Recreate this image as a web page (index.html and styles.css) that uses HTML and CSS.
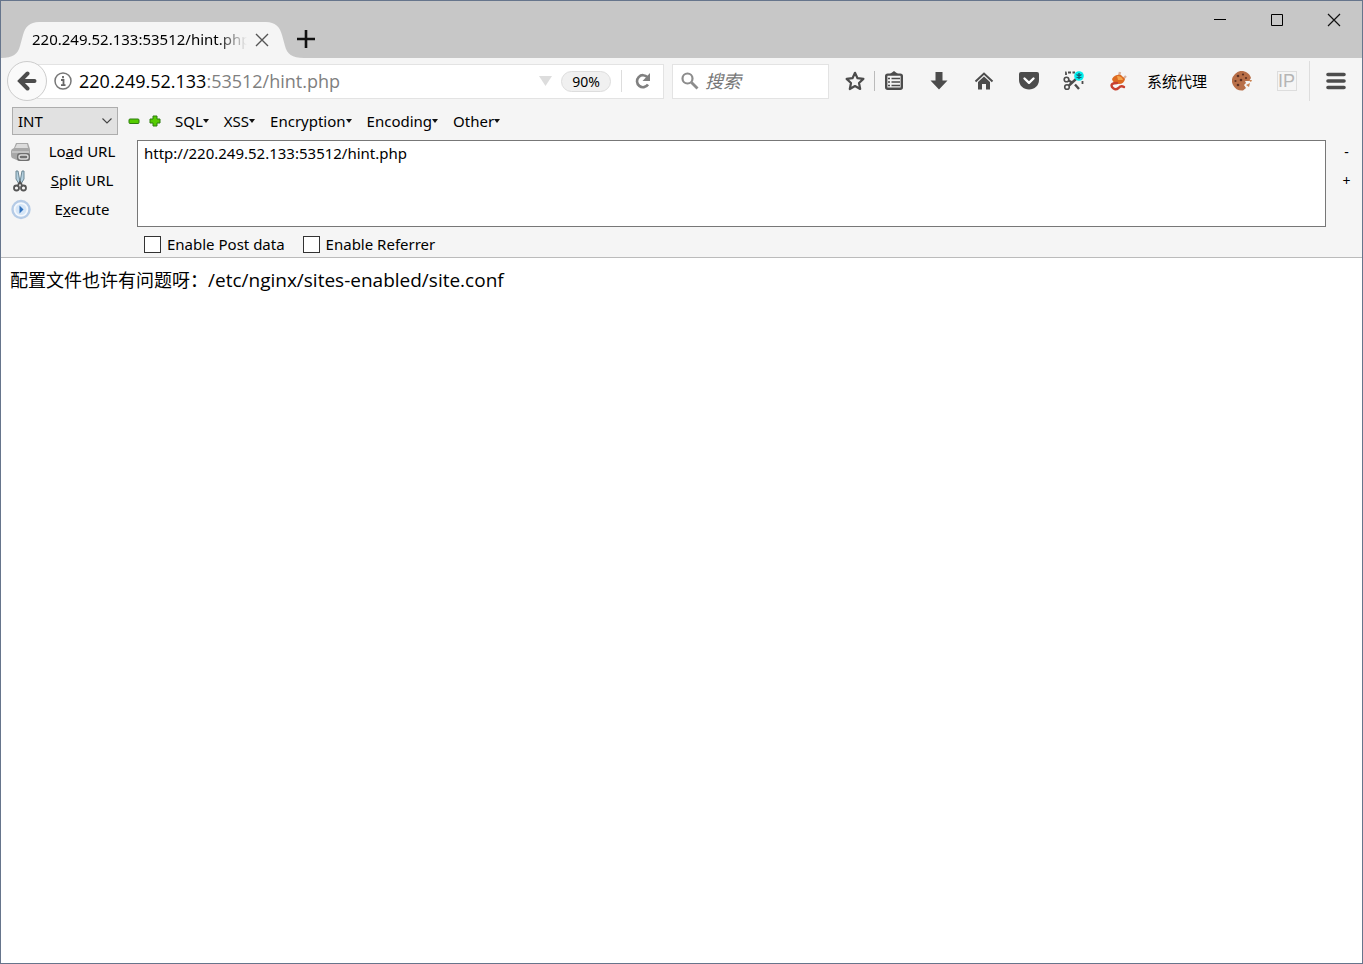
FILE: index.html
```
<!DOCTYPE html>
<html lang="zh-CN">
<head>
    <meta charset="UTF-8">
    <meta name="viewport" content="width=device-width, initial-scale=1.0">
    <title>220.249.52.133:53512/hint.php</title>
    <link rel="stylesheet" href="styles.css">
</head>
<body>
<div class="window">
    <header class="titlebar">
        <div class="tab">
            <svg class="tab-shape" width="303" height="36" viewBox="0 0 303 36"><path d="M0 36C12 36 17 32 19 24L22 13C24 5 29 0 38 0H265C274 0 279 5 281 13L284 24C286 32 291 36 303 36Z" fill="#f5f5f5"/></svg>
            <span class="tab-title">220.249.52.133:53512/hint.php</span>
            <button class="tab-close" aria-label="关闭标签页">
                <svg width="14" height="14" viewBox="0 0 14 14"><path d="M1 1L13 13M13 1L1 13" stroke="#555" stroke-width="1.4"/></svg>
            </button>
        </div>
        <button class="new-tab" aria-label="新标签页">
            <svg width="18" height="18" viewBox="0 0 18 18"><path d="M9 0V18M0 9H18" stroke="#111" stroke-width="2.6"/></svg>
        </button>
        <div class="window-buttons">
            <button aria-label="最小化"><svg width="14" height="14" viewBox="0 0 14 14"><path d="M1 6.500H13" stroke="#000"/></svg></button>
            <button aria-label="最大化"><svg width="14" height="14" viewBox="0 0 14 14"><path d="M1.500 1.500H12.500V12.500H1.500Z" fill="none" stroke="#000"/></svg></button>
            <button aria-label="关闭"><svg width="14" height="14" viewBox="0 0 14 14"><path d="M1 1L13 13M13 1L1 13" stroke="#111" stroke-width="1.2"/></svg></button>
        </div>
    </header>

    <!-- 导航栏 -->
    <nav class="navbar">
        <button class="back" aria-label="后退">
            <svg width="20" height="20" viewBox="0 0 20 20"><path d="M10.500 2.500L3 10L10.500 17.500M3.500 10H17.500" fill="none" stroke="#4c4c4c" stroke-width="4" stroke-linecap="round" stroke-linejoin="miter"/></svg>
        </button>
        <div class="urlbar">
            <svg width="18" height="18" viewBox="0 0 18 18"><circle cx="9" cy="9" r="8" fill="none" stroke="#777" stroke-width="1.500"/><path d="M9 4V6.200M7 8H9.500V13M7 13.200H11.500" fill="none" stroke="#666" stroke-width="1.800"/></svg>
            <span class="url"><b>220.249.52.133</b>:53512/hint.php</span>
            <svg class="dropmarker" width="13" height="10" viewBox="0 0 13 10"><path d="M0 0H13L6.500 10Z" fill="#ddd"/></svg>
            <button class="zoom">90%</button>
            <button class="reload" aria-label="刷新">
                <svg width="16" height="16" viewBox="0 0 16 16"><path d="M12.500 4.200A6 6 0 1 0 13 11.500" fill="none" stroke="#808080" stroke-width="2.600"/><path d="M15 0V8H7.500Z" fill="#808080"/></svg>
            </button>
        </div>
        <label class="searchbar">
            <svg width="18" height="18" viewBox="0 0 18 18"><circle cx="6.500" cy="6.500" r="5" fill="none" stroke="#8c8c8c" stroke-width="2.200"/><path d="M10.500 10.500L16.500 16.500" stroke="#8c8c8c" stroke-width="2.800"/></svg>
            <input type="text" placeholder="搜索" aria-label="搜索">
        </label>
        <button class="star" aria-label="收藏">
            <svg width="20" height="20" viewBox="0 0 20 20"><path d="M10 1.800L12.500 7.200L18.400 7.900L14 12L15.200 18L10 15L4.800 18L6 12L1.600 7.900L7.500 7.200Z" fill="none" stroke="#4c4c4c" stroke-width="2.200" stroke-linejoin="round"/></svg>
        </button>
        <div class="tools">
            <button aria-label="书签">
                <svg width="20" height="20" viewBox="0 0 20 20"><path d="M6 3L10 0L14 3Z" fill="#4c4c4c"/><rect x="2.200" y="3.600" width="15.600" height="14.200" rx="1.500" fill="none" stroke="#4c4c4c" stroke-width="2.400"/><path d="M4 7.500H6M7.500 7.500H16M4 11H6M7.500 11H16M4 14.500H6M7.500 14.500H16" stroke="#4c4c4c" stroke-width="1.600"/></svg>
            </button>
            <button aria-label="下载">
                <svg width="20" height="20" viewBox="0 0 20 20"><path d="M6.500 1H13.500V9.500H18.500L10 18.500L1.500 9.500H6.500Z" fill="#4c4c4c"/></svg>
            </button>
            <button aria-label="主页">
                <svg width="20" height="20" viewBox="0 0 20 20"><path d="M1.500 10.500L10 2.500L18.500 10.500" fill="none" stroke="#4c4c4c" stroke-width="2"/><path d="M4 11L10 5.500L16 11V18.500H12V13H8V18.500H4Z" fill="#4c4c4c"/></svg>
            </button>
            <button aria-label="Pocket">
                <svg width="20" height="20" viewBox="0 0 20 20"><path d="M2 1H18Q20 1 20 3V9C20 14.500 15.500 18.500 10 18.500S0 14.500 0 9V3Q0 1 2 1Z" fill="#4c4c4c"/><path d="M5.500 7.500L10 11.800L14.500 7.500" fill="none" stroke="#fff" stroke-width="2.400" stroke-linecap="round" stroke-linejoin="round"/></svg>
            </button>
            <button aria-label="截图">
                <svg width="22" height="20" viewBox="0 0 22 20"><path d="M3 4V1.500H12M19.500 10V13" fill="none" stroke="#4c4c4c" stroke-width="1.800" stroke-dasharray="3 1.500"/><circle cx="3.500" cy="8.500" r="2.300" fill="none" stroke="#4c4c4c" stroke-width="1.600"/><circle cx="4" cy="16" r="2.300" fill="none" stroke="#4c4c4c" stroke-width="1.600"/><path d="M5.500 9.500L10 12M12 13.500L16 18M6 14.500L13 8" stroke="#4c4c4c" stroke-width="2.400"/><circle cx="16" cy="5" r="4.800" fill="#0ee"/><path d="M16 2V8M13.500 3.500L18.500 6.500M18.500 3.500L13.500 6.500" stroke="#155c70" stroke-width="1.400"/></svg>
            </button>
            <button aria-label="FoxyProxy">
                <svg width="20" height="20" viewBox="0 0 20 20"><path d="M10 5L11 1M14 8L17 5" stroke="#d9b09c" stroke-width="2.400"/><path d="M3 8Q6 3 12 4L16 8Q15 13 10 13Q4 13 3 8Z" fill="#dd6a20"/><path d="M8 5Q13 5 14 9L9 9Z" fill="#f5a44c"/><path d="M8 12Q1 12 3 16Q6 20 9.500 17Q12 14 15 16" fill="none" stroke="#c8402f" stroke-width="2.400" stroke-linecap="round"/></svg>
            </button>
            <button class="proxy">系统代理</button>
            <button aria-label="Cookie">
                <svg width="20" height="20" viewBox="0 0 20 20"><path d="M14 1Q8-2 3 3T1 14Q4 20 11 19.500L14 17L12 14L14 12L13 10L17 10L19 7Q18 3 14 1Z" fill="#b86f48"/><path d="M14 14L18 12L17 16ZM16 9L20 9L19 11Z" fill="#c9814f"/><g fill="#5c3022"><circle cx="6" cy="5" r="1.300"/><circle cx="11" cy="3.500" r="1.100"/><circle cx="3.500" cy="10" r="1.100"/><circle cx="9" cy="9" r="1.300"/><circle cx="6" cy="14" r="1.300"/><circle cx="14" cy="7" r="1.100"/></g></svg>
            </button>
            <button class="ip"><span>IP</span></button>
        </div>
        <button class="menu" aria-label="菜单">
            <svg width="20" height="18" viewBox="0 0 20 18"><path d="M2 2.500H18M2 9H18M2 15.500H18" stroke="#4c4c4c" stroke-width="3.600" stroke-linecap="round"/></svg>
        </button>
    </nav>

    <!-- HackBar -->
    <section class="hackbar">
        <div class="hackbar-menu">
            <div class="select">
                <select aria-label="类型">
                    <option>INT</option>
                </select>
                <svg width="10" height="6" viewBox="0 0 10 6"><path d="M0.500 0.500L5 5L9.500 0.500" fill="none" stroke="#444" stroke-width="1.100"/></svg>
            </div>
            <button class="minus" aria-label="减"><svg width="12" height="12" viewBox="0 0 12 12"><rect x="1" y="4" width="10" height="4.500" rx="1" fill="#5c0" stroke="#2f7d10"/></svg></button>
            <button class="plus" aria-label="加"><svg width="12" height="12" viewBox="0 0 12 12"><path d="M4 1H8V4H11V8H8V11H4V8H1V4H4Z" fill="#5c0" stroke="#2f7d10" stroke-linejoin="round"/></svg></button>
            <div class="menus">
                <button>SQL</button>
                <button>XSS</button>
                <button>Encryption</button>
                <button>Encoding</button>
                <button>Other</button>
            </div>
        </div>
        <div class="hackbar-main">
            <div class="actions">
                <button>
                    <svg width="22" height="22" viewBox="0 0 22 22"><path d="M6 2H18L20 8V18Q20 20 18 20H9L2 17Q1 16 1 14V10Q1 8 4 7Z" fill="#a8a8a8"/><path d="M7 3H17L18 7H5Z" fill="#dcdcdc"/><path d="M2 10H19V12H2Z" fill="#c4c4c4"/><rect x="7" y="12" width="13" height="8" rx="3" fill="#707070"/><rect x="9" y="14" width="9" height="4" rx="2" fill="none" stroke="#ddd" stroke-width="1.400"/></svg>
                    <span>Lo<u>a</u>d URL</span>
                </button>
                <button>
                    <svg width="22" height="24" viewBox="0 0 22 24"><path d="M6 2V10L9 15L10 13L8 2ZM14 2V10L11 15L10 13L12 2Z" fill="#b4d0df" stroke="#6c8794"/><circle cx="6.500" cy="19" r="2.500" fill="none" stroke="#555" stroke-width="1.800"/><circle cx="13.500" cy="19" r="2.500" fill="none" stroke="#555" stroke-width="1.800"/><path d="M8 16L10 13L12 16" fill="none" stroke="#555" stroke-width="2"/></svg>
                    <span><u>S</u>plit URL</span>
                </button>
                <button>
                    <svg width="22" height="22" viewBox="0 0 22 22"><circle cx="11" cy="10.500" r="8.500" fill="#f4f8fd" stroke="#b5cbe6" stroke-width="2.400"/><circle cx="11" cy="10.500" r="5.500" fill="#d6e6f7"/><path d="M9.500 6.500L13.500 10.500L9.500 14.500Z" fill="#3474c0"/></svg>
                    <span>E<u>x</u>ecute</span>
                </button>
            </div>
            <div class="fields">
                <textarea aria-label="URL" spellcheck="false">http://220.249.52.133:53512/hint.php</textarea>
                <div class="checks">
                    <label><input type="checkbox"> Enable Post data</label>
                    <label><input type="checkbox"> Enable Referrer</label>
                </div>
            </div>
            <div class="resize">
                <button>-</button>
                <button>+</button>
            </div>
        </div>
    </section>

    <main>配置文件也许有问题呀：<span class="path">/etc/nginx/sites-enabled/site.conf</span></main>
</div>
</body>
</html>
```

FILE: styles.css
```
* {
    box-sizing: border-box;
}
body {
    margin: 0;
    font-family: "Noto Sans", "Noto Sans CJK SC", sans-serif;
    font-size: 15px;
    color: #000;
}
button, input, select, textarea {
    font: inherit;
    color: inherit;
}
button {
    display: flex;
    align-items: center;
    justify-content: center;
    padding: 0;
    border: none;
    background: none;
}
svg {
    flex-shrink: 0;
}
.window {
    display: flex;
    flex-direction: column;
    min-height: 100vh;
    border: 1px solid #66758c;
    background: #fff;
}

/* 标题栏 */
.titlebar {
    display: flex;
    align-items: flex-end;
    height: 57px;
    background: #c7c7c7;
}
.tab {
    position: relative;
    display: flex;
    align-items: center;
    width: 290px;
    height: 36px;
    padding-left: 31px;
}
.tab-shape {
    position: absolute;
    left: 0;
    top: 0;
}
.tab-title {
    position: relative;
    width: 215px;
    padding-bottom: 2px;
    white-space: nowrap;
    mask-image: linear-gradient(to right, #000 185px, transparent 215px);
}
.tab-close {
    position: relative;
    width: 30px;
    height: 30px;
}
.new-tab {
    width: 30px;
    height: 38px;
}
.window-buttons {
    display: flex;
    align-self: flex-start;
    margin-left: auto;
}
.window-buttons button {
    width: 57px;
    height: 38px;
}

/* 导航栏 */
.navbar {
    display: flex;
    align-items: center;
    height: 46px;
    padding-left: 6px;
    background: #f5f5f5;
}
.back {
    z-index: 1;
    width: 40px;
    height: 40px;
    border: 1px solid #ccc;
    border-radius: 50%;
    background: #fafafa;
}
.urlbar {
    display: flex;
    flex: 1;
    align-items: center;
    height: 35px;
    margin-left: -10px;
    padding-left: 16px;
    border: 1px solid #e3e3e3;
    background: #fff;
}
.url {
    flex: 1;
    margin-left: 7px;
    font-family: "Open Sans", sans-serif;
    font-size: 18px;
    color: #808080;
}
.url b {
    font-weight: normal;
    color: #000;
}
.zoom {
    width: 50px;
    height: 21px;
    margin: 0 10px 0 9px;
    border: 1px solid #ddd;
    border-radius: 11px;
    background: #f0f0f0;
    font-size: 14px;
}
.reload {
    width: 42px;
    height: 22px;
    border-left: 1px solid #ddd;
}
.searchbar {
    display: flex;
    align-items: center;
    width: 157px;
    height: 35px;
    margin: 0 14px 0 8px;
    padding-left: 8px;
    border: 1px solid #e3e3e3;
    background: #fff;
}
.searchbar input {
    width: 100px;
    margin-left: 6px;
    padding: 0;
    border: none;
    outline: none;
    background: none;
    font-size: 18px;
}
.searchbar input::placeholder {
    font-style: italic;
    color: #777;
}
.star {
    width: 32px;
    height: 20px;
    padding-right: 8px;
    border-right: 1px solid #bbb;
}
.tools {
    display: flex;
    margin-left: -4px;
}
.tools button {
    width: 45px;
    height: 40px;
}
.tools .proxy {
    width: 78px;
    padding: 0 6px 2px 0;
}
.ip span {
    width: 20px;
    border: 1px solid #ddd;
    line-height: 18px;
    text-align: center;
    font-family: "Liberation Sans", sans-serif;
    font-size: 18px;
    color: #b5b5b5;
}
.menu {
    width: 53px;
    height: 40px;
    border-left: 1px solid #ddd;
}

/* HackBar */
.hackbar {
    height: 154px;
    padding-top: 3px;
    border-bottom: 1px solid #bbb;
    background: #f5f5f5;
}
.hackbar-menu {
    display: flex;
    align-items: center;
    height: 28px;
    padding-left: 11px;
}
.select {
    position: relative;
}
.select select {
    width: 106px;
    height: 28px;
    padding: 0 5px;
    border: 1px solid #adadad;
    border-radius: 0;
    background: #e1e1e1;
    appearance: none;
}
.select svg {
    position: absolute;
    right: 6px;
    top: 11px;
    pointer-events: none;
}
.minus {
    margin-left: 10px;
}
.plus {
    margin-left: 9px;
}
.menus {
    display: flex;
    gap: 15px;
    margin-left: 14px;
}
.menus button::after {
    content: "";
    border: 3px solid transparent;
    border-top: 4px solid #111;
    border-bottom: none;
}
.hackbar-main {
    display: flex;
    padding-top: 5px;
}
.actions {
    width: 136px;
    padding: 0 10px 0 9px;
    margin-top: -3px;
}
.actions button {
    width: 100%;
    height: 29px;
}
.actions span {
    flex: 1;
    padding: 0 0 2px 5px;
}
.fields {
    flex: 1;
}
.fields textarea {
    display: block;
    width: 100%;
    height: 87px;
    padding: 2px 6px;
    border: 1px solid #777;
    line-height: 20px;
    background: #fff;
    resize: none;
    outline: none;
}
.checks {
    display: flex;
    gap: 18px;
    margin-top: 7px;
    padding-left: 7px;
}
.checks label {
    display: flex;
    align-items: center;
    gap: 6px;
    line-height: 20px;
}
.checks input {
    width: 17px;
    height: 17px;
    margin: 0;
    border: 1px solid #333;
    background: #fff;
    appearance: none;
}
.resize {
    width: 36px;
    margin-top: -3px;
    padding-left: 5px;
}
.resize button {
    width: 31px;
    height: 29px;
    font-size: 14px;
}

main {
    padding: 9px;
    line-height: 27px;
    font-size: 18px;
}
.path {
    font-family: "Open Sans", sans-serif;
    font-size: 19px;
}
```
